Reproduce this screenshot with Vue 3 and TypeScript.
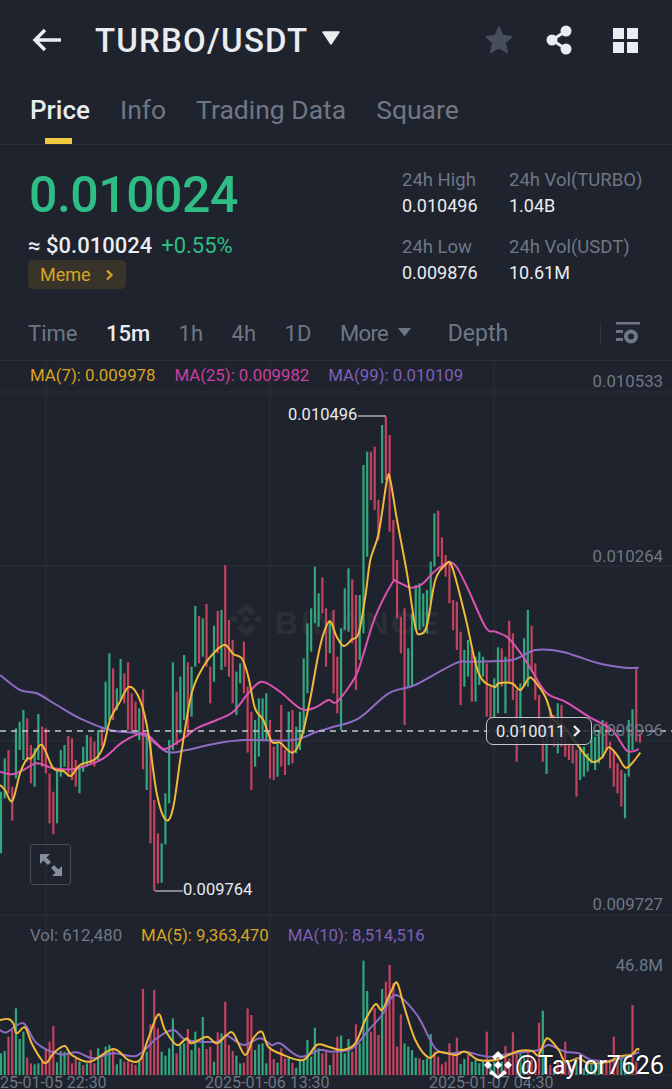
<template>
  <div class="page">
    <header class="top">
      <svg class="back" width="30" height="24" viewBox="0 0 30 24">
        <path d="M13 2 3 12l10 10M3 12h26" fill="none" stroke="#eaecef" stroke-width="3.4" />
      </svg>
      <div class="pair">TURBO/USDT</div>
      <svg class="caret" width="18" height="14" viewBox="0 0 18 14">
        <path d="M1 1h16L9 13Z" fill="#eaecef" stroke="#eaecef" stroke-width="1.5" stroke-linejoin="round" />
      </svg>
      <div class="top-icons">
        <svg width="30" height="30" viewBox="0 0 30 30">
          <path d="M15 1.5l4 9 9.5 1-7 6.6 2 9.9-8.500-5-8.500 5 2-9.900-7-6.600 9.500-1Z" fill="#474d5a" stroke="#474d5a" stroke-linejoin="round" />
        </svg>
        <svg class="share" width="28" height="30" viewBox="0 0 28 30">
          <path d="M21 6 7 15l14 9" fill="none" stroke="#eaecef" stroke-width="3" />
          <circle cx="21" cy="6" r="5.500" fill="#eaecef" />
          <circle cx="7" cy="15" r="5.500" fill="#eaecef" />
          <circle cx="21" cy="24" r="5.500" fill="#eaecef" />
        </svg>
        <div class="grid-icon"><i></i><i></i><i></i><i></i></div>
      </div>
    </header>

    <nav class="tabs">
      <div v-for="(t, i) in tabs" :key="t" class="tab" :class="{ active: i === 0 }">{{ t }}</div>
    </nav>

    <section class="summary">
      <div class="left">
        <div class="last">0.010024</div>
        <div class="approx"><span class="usd">≈ $0.010024</span><span class="pct">+0.55%</span></div>
        <div class="tag-meme">Meme
          <svg width="9" height="12" viewBox="0 0 9 12"><path d="M2 1.500 6.500 6 2 10.500" fill="none" stroke="#d9a520" stroke-width="2.200" /></svg>
        </div>
      </div>
      <div class="stats">
        <div v-for="s in stats" :key="s.label" class="stat">
          <div class="stat-label">{{ s.label }}</div>
          <div class="stat-value">{{ s.value }}</div>
        </div>
      </div>
    </section>

    <div class="times">
      <span v-for="t in times" :key="t.text" class="time" :class="t.cls">{{ t.text }}</span>
      <svg class="more-caret" width="13" height="9" viewBox="0 0 13 9"><path d="M0 0h13L6.500 8.500Z" fill="#6f7785" /></svg>
      <span class="sep"></span>
      <svg class="cfg" width="24" height="23" viewBox="0 0 24 23">
        <path d="M0 0h24v2.500H0ZM0 8h7v3H0ZM0 16h7v3H0Z" fill="#6f7785" />
        <circle cx="15" cy="14.500" r="5" fill="none" stroke="#6f7785" stroke-width="4" />
      </svg>
    </div>

    <div class="chart">
      <svg class="canvas" width="672" height="728" viewBox="0 361 672 728">
        <g stroke="#2b3039" stroke-width="1">
          <line v-for="y in [392, 566, 741, 915, 1075]" :key="y" x1="0" x2="672" :y1="y" :y2="y" />
          <line v-for="x in [46, 270, 494]" :key="x" :x1="x" :x2="x" y1="361" y2="1075" />
        </g>
        <g fill="#2b3038">
          <path d="M246 603l9 9-4 4-5-5-5 5-4-4ZM234 615l4 4-4 4-4-4ZM258 615l4 4-4 4-4-4ZM246 615l4 4-4 4-4-4ZM241 624l5 5 5-5 4 4-9 9-9-9Z" />
          <text x="275" y="634" class="mark">BINANCE</text>
        </g>
        <rect v-for="b in volBars" :key="'v' + b.x" :x="b.x" :y="b.y" width="2.200" :height="b.h" :fill="b.c" />
        <rect v-for="b in candleBars" :key="'c' + b.x" :x="b.x" :y="b.y" width="2.200" :height="b.h" :fill="b.c" />
        <path :d="ma99" class="ln" stroke="#8e6cc4" />
        <path :d="ma25" class="ln" stroke="#dc52b2" />
        <path :d="ma7" class="ln" stroke="#f0b93a" />
        <path :d="volMa10" class="ln" stroke="#8e6cc4" />
        <path :d="volMa5" class="ln" stroke="#f0b93a" />
        <line x1="0" x2="672" y1="731" y2="731" stroke="#c4c8ce" stroke-width="1.500" stroke-dasharray="6 5" />
        <path d="M358 416h28" stroke="#eaecef" fill="none" />
        <path d="M155 891h28" stroke="#eaecef" fill="none" />
      </svg>

      <section class="main-plot">
        <div class="legend main-legend">
          <span class="yellow">MA(7): 0.009978</span>
          <span class="pink">MA(25): 0.009982</span>
          <span class="purple">MA(99): 0.010109</span>
        </div>
        <span v-for="a in axis" :key="a.text" class="axis" :style="{ top: a.top + 'px' }">{{ a.text }}</span>
        <span class="peak hi">0.010496</span>
        <span class="peak lo">0.009764</span>
        <div class="now-tag">0.010011
          <svg width="10" height="14" viewBox="0 0 10 14"><path d="M2 2l5 5-5 5" fill="none" stroke="#eaecef" stroke-width="2.400" /></svg>
        </div>
        <div class="expand">
          <svg width="28" height="28" viewBox="0 0 28 28">
            <path d="M3 3h10L9.500 6.500 14 11l-3 3-4.500-4.500L3 13ZM25 25H15l3.500-3.500L14 17l3-3 4.500 4.500L25 15Z" fill="#848e9c" />
          </svg>
        </div>
      </section>

      <section class="vol-plot">
        <div class="legend vol-legend">
          <span class="grey">Vol: 612,480</span>
          <span class="yellow">MA(5): 9,363,470</span>
          <span class="purple">MA(10): 8,514,516</span>
        </div>
        <span class="axis vol-max">46.8M</span>
        <div class="dates">
          <span>25-01-05 22:30</span>
          <span>2025-01-06 13:30</span>
          <span>2025-01-07 04:30</span>
        </div>
        <div class="stamp">
          <svg width="30" height="30" viewBox="0 0 30 30">
            <path d="M15 1l6 6-3 3-3-3-3 3-3-3ZM5 11l4 4-4 4-4-4ZM25 11l4 4-4 4-4-4ZM15 11l4 4-4 4-4-4ZM9 20l6 6 6-6 3 3-9 6-9-6Z" fill="#fff" />
          </svg>
          <span>@Taylor7626</span>
        </div>
      </section>
    </div>
  </div>
</template>

<script setup lang="ts">
type Candle = [number, number, number];
type Vol = [number, number];
type Pt = [number, number];

const tabs = ["Price", "Info", "Trading Data", "Square"];

const stats = [
  { label: "24h High", value: "0.010496" },
  { label: "24h Vol(TURBO)", value: "1.04B" },
  { label: "24h Low", value: "0.009876" },
  { label: "24h Vol(USDT)", value: "10.61M" },
];

const times = [
  { text: "Time", cls: "" },
  { text: "15m", cls: "on" },
  { text: "1h", cls: "" },
  { text: "4h", cls: "" },
  { text: "1D", cls: "" },
  { text: "More", cls: "more" },
  { text: "Depth", cls: "depth" },
];

const axis = [
  { text: "0.010533", top: 10 },
  { text: "0.010264", top: 185 },
  { text: "0.009996", top: 359 },
  { text: "0.009727", top: 533 },
];

// top, bottom, 1 = green, read off the reference at 3x
const candles: Candle[] = [
  [1175,1360,1],[1075,1195,1],[1050,1180,0],[1160,1262,0],[985,1135,1],[965,1050,1],[930,1080,1],[955,1085,0],
  [1035,1150,0],[1045,1160,1],[942,1080,1],[980,1100,0],[985,1120,0],[1120,1270,0],[1175,1303,0],[1110,1270,1],
  [1050,1130,1],[1035,1100,1],[1008,1130,0],[1015,1140,0],[1080,1160,0],[1100,1180,1],[1040,1115,1],[1005,1100,1],
  [1010,1090,0],[1025,1100,0],[990,1080,1],[985,1040,0],[845,990,1],[760,960,1],[805,960,0],[865,930,1],
  [777,900,1],[820,910,0],[787,990,0],[880,1000,0],[905,1000,0],[925,1020,1],[868,1108,0],[1000,1170,1],
  [1020,1330,0],[1200,1473,0],[1300,1450,0],[1330,1448,1],[1180,1333,1],[1020,1210,1],[787,1050,1],[875,1035,0],
  [830,1000,1],[765,960,1],[787,1010,0],[800,950,1],[618,800,1],[648,790,0],[655,770,1],[612,800,0],
  [800,910,0],[677,845,1],[633,760,0],[630,810,1],[495,800,0],[660,830,0],[720,910,0],[815,945,1],
  [790,850,1],[725,880,0],[860,1058,0],[935,1170,0],[960,1100,1],[895,1070,1],[895,1020,1],[880,1020,1],
  [960,1135,0],[1040,1140,0],[1030,1130,1],[915,1100,0],[1050,1125,0],[935,1095,1],[930,1090,0],[980,1060,1],
  [935,1050,1],[775,1000,1],[670,880,1],[625,755,1],[500,670,1],[580,680,1],[532,640,0],[625,800,0],
  [660,760,1],[630,880,0],[770,940,0],
  [685,990,1],[565,690,1],[505,695,1],[538,730,0],[585,870,0],[585,780,1],[195,700,1],[155,470,1],
  [155,300,0],[140,330,0],[300,420,0],[75,250,1],[50,240,0],[105,395,0],[360,540,0],[480,655,0],
  [650,760,0],[625,975,0],[745,860,1],[640,860,1],[555,690,1],[550,690,1],[580,680,1],[570,700,1],
  [485,610,1],[340,500,1],[332,470,0],[412,510,0],[465,530,0],[490,610,0],[600,690,0],[605,750,0],
  [695,915,0],[750,860,1],[720,830,1],[750,905,0],[770,905,1],[755,855,1],[770,830,1],[790,950,0],
  [860,955,0],[835,955,1],[742,940,1],[745,860,0],[770,940,1],[662,850,0],[700,900,0],[870,1085,0],
  [850,1000,1],[715,860,1],[630,860,1],[677,815,0],[790,900,0],[885,1000,0],[960,1085,0],[985,1122,1],
  [925,1010,0],[945,1040,0],[910,1060,1],[915,1040,0],[1000,1070,0],[1030,1080,0],[1035,1090,0],[1050,1190,0],
  [1040,1140,1],[1040,1130,1],[1060,1115,1],[990,1090,1],[1010,1110,1],[990,1090,1],[960,1075,1],[965,1050,0],
  [1025,1105,0],[1050,1160,0],[1090,1180,0],[1110,1220,0],[1120,1255,1],[960,1130,1],[928,1050,1],[805,1025,0],
  [1000,1028,0],
];

const vols: Vol[] = [
  [415,1],[408,1],[365,0],[345,0],[280,1],[372,1],[350,1],[428,0],[445,0],[448,1],[445,1],[440,0],[405,0],[380,0],
  [333,0],[442,1],[408,1],[410,1],[420,0],[445,0],[432,0],[440,1],[450,0],[445,1],[405,0],[445,0],[400,1],[430,0],
  [395,1],[390,1],[405,0],[448,1],[432,1],[440,0],[440,0],[445,0],[450,0],[440,1],[222,0],[410,1],[328,0],[225,0],
  [340,0],[410,1],[422,1],[400,1],[310,1],[415,0],[390,1],[385,1],[342,0],[405,1],[350,1],[398,0],[306,1],[402,0],
  [395,0],[440,1],[352,0],[355,1],[260,0],[390,0],[408,0],[422,1],[445,1],[443,0],[280,0],[300,0],[405,1],[388,1],
  [385,1],[445,1],[395,0],[432,0],[443,1],[400,0],[430,0],[428,1],[443,0],[458,1],[438,1],[432,1],[375,1],[425,1],
  [338,1],[400,1],[415,0],[410,0],[450,1],[415,0],[365,0],
  [362,1],[415,1],[372,1],[410,0],[328,0],[385,1],[137,1],[228,1],[350,0],[280,0],[360,0],[222,1],[200,0],[150,0],
  [205,0],[395,0],[298,0],[385,1],[395,1],[405,1],[428,1],[430,0],[435,1],[430,1],[357,1],[410,0],[425,0],[448,0],
  [440,0],[385,0],[415,0],[368,0],[447,1],[432,1],[420,0],[440,1],[435,1],[445,1],[440,1],[350,0],[450,1],[440,1],
  [430,0],[440,1],[393,0],[430,0],[352,0],[410,0],[415,1],[420,1],[405,0],[430,0],[440,0],[323,0],[287,1],[460,0],
  [450,0],[465,1],[440,0],[445,0],[380,0],[440,0],[450,0],[440,1],[450,1],[460,1],[445,1],[450,1],[445,1],[440,1],
  [440,0],[440,0],[440,0],[365,0],[440,0],[430,1],[440,1],[440,1],[270,0],[440,0],
];

const red = "#c2435f";
const green = "#31a67f";
const barX = (i: number) => (3 + 11.21 * i) / 3 - 1.1;

const candleBars = candles.map(([t, b, up], i) => ({
  x: barX(i),
  y: 400 + t / 3,
  h: (b - t) / 3,
  c: up ? green : red,
}));

const volBars = vols.map(([t, up], i) => ({
  x: barX(i),
  y: 915 + t / 3,
  h: (480 - t) / 3,
  c: up ? green : red,
}));

// catmull-rom through the read-off points
function smooth(pts: Pt[]): string {
  let d = `M${pts[0][0]} ${pts[0][1]}`;
  for (let i = 0; i < pts.length - 1; i++) {
    const p0 = pts[Math.max(i - 1, 0)];
    const p1 = pts[i];
    const p2 = pts[i + 1];
    const p3 = pts[Math.min(i + 2, pts.length - 1)];
    const c1x = p1[0] + (p2[0] - p0[0]) / 6;
    const c1y = p1[1] + (p2[1] - p0[1]) / 6;
    const c2x = p2[0] - (p3[0] - p1[0]) / 6;
    const c2y = p2[1] - (p3[1] - p1[1]) / 6;
    d += `C${c1x.toFixed(1)} ${c1y.toFixed(1)} ${c2x.toFixed(1)} ${c2y.toFixed(1)} ${p2[0].toFixed(1)} ${p2[1].toFixed(1)}`;
  }
  return d;
}

const place = (a: Pt[], b: Pt[], top: number): Pt[] => [
  ...a.map(([x, y]): Pt => [x / 3, top + y / 3]),
  ...b.map(([x, y]): Pt => [(x + 996) / 3, top + y / 3]),
];

const ma7 = smooth(place(
  [[0,1155],[15,1170],[37,1203],[60,1120],[80,1078],[95,1073],[120,1035],[135,1050],[160,1105],[190,1113],[212,1128],[240,1095],[285,1078],[310,1040],[330,960],[360,905],[388,860],[420,900],[445,1000],[470,1180],[498,1260],[520,1220],[545,1050],[575,880],[610,800],[650,750],[676,735],[700,762],[725,775],[745,830],[765,925],[790,960],[815,1025],[840,1028],[878,1058],[905,1010],[930,900],[960,740],[988,665]],
  [[14,710],[35,738],[60,718],[80,700],[100,590],[115,480],[140,400],[165,240],[175,240],[195,360],[225,520],[250,680],[265,702],[285,675],[310,540],[340,495],[360,500],[400,650],[440,820],[485,860],[500,850],[540,850],[565,870],[590,835],[605,840],[640,890],[665,960],[700,985],[740,1040],[780,1085],[810,1072],[830,1042],[855,1065],[880,1103],[900,1090],[925,1058]],
  400,
));

const ma25 = smooth(place(
  [[0,1115],[35,1123],[70,1110],[110,1090],[160,1105],[215,1108],[250,1100],[310,1075],[370,1025],[430,1000],[465,1025],[495,1047],[550,1015],[590,985],[650,960],[700,935],[745,880],[785,845],[840,875],[900,925],[940,925],[985,900]],
  [[15,905],[70,830],[95,760],[130,650],[180,550],[195,545],[235,563],[270,553],[310,512],[360,488],[400,550],[460,680],[490,695],[530,715],[580,780],[640,875],[700,905],[770,950],[840,990],[885,1052],[920,1048]],
  400,
));

const ma99 = smooth(place(
  [[0,825],[60,870],[110,880],[170,915],[240,955],[330,990],[430,1005],[500,1055],[560,1050],[640,1032],[730,1020],[880,1020],[950,995]],
  [[0,982],[80,955],[170,880],[250,855],[370,790],[420,785],[540,780],[610,750],[690,755],[800,790],[880,803],[920,803]],
  400,
));

const volMa5 = smooth(place(
  [[0,315],[25,312],[40,325],[50,355],[75,337],[95,385],[125,435],[140,443],[165,410],[195,393],[215,420],[270,440],[340,402],[385,435],[420,435],[445,370],[475,298],[495,345],[530,390],[560,370],[575,385],[620,365],[650,385],[680,360],[700,355],[735,420],[760,370],[785,350],[805,395],[845,418],[910,435],[950,390],[985,395]],
  [[30,405],[70,385],[100,315],[130,268],[150,285],[175,235],[195,203],[215,270],[250,375],[290,428],[320,410],[370,420],[400,410],[440,435],[490,435],[530,420],[560,408],[600,408],[620,420],[645,370],[680,405],[700,440],[740,430],[770,445],[830,440],[860,425],[900,418],[915,402],[922,405]],
  915,
));

const volMa10 = smooth(place(
  [[0,345],[20,352],[70,325],[110,385],[180,418],[230,412],[280,430],[340,415],[410,422],[470,370],[520,345],[560,375],[650,380],[680,362],[730,390],[780,370],[815,390],[840,385],[900,425],[960,405]],
  [[0,410],[60,400],[110,345],[150,300],[190,240],[255,300],[310,400],[360,415],[400,410],[470,425],[540,415],[620,405],[650,390],[700,410],[740,415],[780,435],[850,435],[922,412]],
  915,
));
</script>

<style>
html,
body {
  margin: 0;
  background: #1e232d;
}
</style>

<style scoped>
.page {
  width: 672px;
  height: 1089px;
  overflow: hidden;
  background: #1e232d;
  font-family: Roboto, "Noto Sans", sans-serif;
  color: #eaecef;
}

.top {
  display: flex;
  align-items: center;
  height: 80px;
  padding-left: 32px;
  padding-right: 34px;
}

.back {
  margin-right: 33px;
}

.pair {
  font-size: 33px;
  font-weight: 500;
  letter-spacing: 1.2px;
  margin-right: 14px;
}

.caret {
  margin-top: -4px;
}

.top-icons {
  margin-left: auto;
  display: flex;
  align-items: center;
}

.share {
  margin-left: 31px;
  margin-right: 40px;
}

.grid-icon {
  display: grid;
  grid-template-columns: 11px 11px;
  grid-template-rows: 11px 11px;
  gap: 3px;
}

.grid-icon i {
  background: #eaecef;
}

.tabs {
  display: flex;
  gap: 30px;
  height: 65px;
  padding-left: 30px;
  box-sizing: border-box;
  border-bottom: 1px solid #2b3039;
}

.tab {
  position: relative;
  font-size: 26.500px;
  line-height: 60px;
  color: #6f7785;
}

.tab.active {
  color: #eaecef;
  font-size: 26px;
  font-weight: 500;
}

.tab.active::after {
  content: "";
  position: absolute;
  left: 15px;
  width: 27px;
  bottom: 0;
  height: 6px;
  background: #f0c93e;
}

.summary {
  display: flex;
  justify-content: space-between;
  height: 150px;
  padding: 20px 28px 0 28px;
  box-sizing: border-box;
}

.left {
  display: flex;
  flex-direction: column;
  align-items: flex-start;
}

.last {
  font-size: 50px;
  line-height: 60px;
  font-weight: 500;
  letter-spacing: -0.5px;
  color: #2ebd85;
  padding-left: 1px;
}

.approx {
  display: flex;
  align-items: baseline;
  gap: 9px;
  margin-top: 8px;
  line-height: 26px;
}

.usd {
  font-size: 22px;
  font-weight: 500;
}

.pct {
  font-size: 22px;
  color: #2ebd85;
}

.tag-meme {
  margin-top: 1px;
  display: flex;
  align-items: center;
  gap: 14px;
  height: 29px;
  padding: 0 12px;
  border-radius: 5px;
  background: #38342a;
  color: #d9a520;
  font-size: 18px;
}

.stats {
  display: grid;
  grid-template-columns: 107px 135px;
  align-content: start;
  row-gap: 15px;
  padding-top: 2px;
}

.stat-label {
  font-size: 18.500px;
  line-height: 26px;
  color: #6f7785;
  white-space: nowrap;
}

.stat-value {
  font-size: 18px;
  line-height: 26px;
  color: #eaecef;
}

.times {
  display: flex;
  align-items: center;
  height: 66px;
  padding-top: 12px;
  padding-left: 28px;
  box-sizing: border-box;
  border-bottom: 1px solid #2b3039;
  font-size: 22px;
  color: #6f7785;
  position: relative;
}

.time {
  margin-right: 28.500px;
}

.time.on {
  color: #eaecef;
  font-weight: 500;
}

.time.more {
  letter-spacing: -0.6px;
}

.time.depth {
  margin-left: 31px;
  font-size: 23px;
}

.more-caret {
  position: absolute;
  left: 398px;
  top: 33px;
}

.sep {
  position: absolute;
  left: 600px;
  top: 27px;
  width: 1px;
  height: 22px;
  background: #2f343d;
}

.cfg {
  position: absolute;
  left: 616px;
  top: 27px;
}

.chart {
  position: relative;
  height: 728px;
}

.canvas {
  position: absolute;
  top: 0;
  left: 0;
}

.ln {
  fill: none;
  stroke-width: 2;
}

.mark {
  font-family: "Liberation Sans", sans-serif;
  font-size: 32px;
  font-weight: 700;
  letter-spacing: 3px;
}

.main-plot {
  position: relative;
  height: 554px;
}

.vol-plot {
  position: relative;
  height: 174px;
}

.legend {
  position: relative;
  display: flex;
  font-size: 16.800px;
  padding-left: 30px;
  white-space: nowrap;
}

.main-legend {
  gap: 19px;
  line-height: 28px;
}

.vol-legend {
  gap: 19px;
  line-height: 40px;
}

.yellow {
  color: #d9a520;
}

.pink {
  color: #c840a0;
}

.purple {
  color: #7f5fb8;
}

.grey {
  color: #6f7785;
}

.axis {
  position: absolute;
  right: 9px;
  font-size: 16.800px;
  line-height: 20px;
  color: #6f7785;
}

.vol-max {
  top: 40px;
}

.peak {
  position: absolute;
  font-size: 16.500px;
  line-height: 20px;
  color: #eaecef;
}

.hi {
  left: 288px;
  top: 44px;
}

.lo {
  left: 183px;
  top: 519px;
}

.now-tag {
  position: absolute;
  left: 486px;
  top: 356px;
  width: 106px;
  height: 28px;
  box-sizing: border-box;
  display: flex;
  align-items: center;
  justify-content: space-between;
  padding: 0 9px;
  border: 1px solid #c4c8ce;
  border-radius: 7px;
  background: rgba(30, 35, 45, 0.85);
  font-size: 16.500px;
  color: #eaecef;
}

.expand {
  position: absolute;
  left: 30px;
  top: 483px;
  width: 41px;
  height: 41px;
  box-sizing: border-box;
  border: 1px solid #474d57;
  border-radius: 3px;
  display: flex;
  align-items: center;
  justify-content: center;
}

.dates {
  position: absolute;
  top: 159px;
  left: 0;
  width: 672px;
  height: 15px;
  overflow: hidden;
  display: flex;
  font-size: 16px;
  line-height: 17px;
  color: #6f7785;
  white-space: nowrap;
}

.dates span:nth-child(1) {
  width: 205px;
}

.dates span:nth-child(2) {
  width: 224px;
}

.stamp {
  position: absolute;
  left: 483px;
  top: 135px;
  display: flex;
  align-items: center;
  gap: 2px;
  color: #fff;
  font-size: 25.500px;
  line-height: 30px;
  text-shadow: 0 0 2px #000;
}
</style>
